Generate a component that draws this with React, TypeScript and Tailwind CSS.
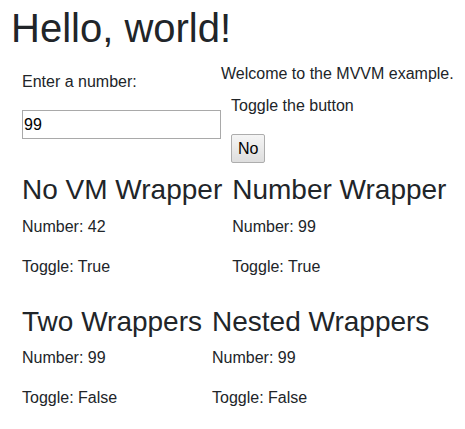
import React, { useState } from 'react';

type Props = { title: string; num: number; toggle: boolean };

const Wrapper: React.FC<Props> = ({ title, num, toggle }) => (
  <div className="mt-[10px]">
    <h3 className="text-[28px] leading-[1.2] mb-2 font-normal whitespace-nowrap">{title}</h3>
    <p className="mb-4">Number: {num}</p>
    <p className="mb-4">Toggle: {toggle ? 'True' : 'False'}</p>
  </div>
);

const App: React.FC = () => {
  const [num, setNum] = useState('99');
  const [on, setOn] = useState(false);

  return (
    <div
      className="min-h-screen bg-white text-[#212529] text-base leading-6 pl-[11px] pt-[4px]"
      style={{ fontFamily: '"Liberation Sans", Arial, sans-serif' }}
    >
      <h1 className="text-[40px] leading-[1.2] mb-2 font-normal">Hello, world!</h1>

      <div className="ml-[11px]">
        <div className="flex items-start">
          <div className="w-[199px] mt-[10px]">
            <p className="mb-4">Enter a number:</p>
            <input
              type="text"
              value={num}
              onChange={(e) => setNum(e.target.value)}
              className="w-[199px] h-[29px] border border-[#a9a9a9] px-px text-black leading-6 outline-none"
            />
          </div>
          <div className="pt-[2px]">
            <div>Welcome to the MVVM example.</div>
            <div className="ml-[10px] mt-[8px]">
              <p className="mb-4">Toggle the button</p>
              <button
                onClick={() => setOn(!on)}
                className="h-[29px] px-[6px] border border-[#adadad] rounded-[2px] bg-gradient-to-b from-[#f5f5f5] to-[#dedede] text-black leading-6"
              >
                {on ? 'Yes' : 'No'}
              </button>
            </div>
          </div>
        </div>

        <div className="flex gap-[10px]">
          <Wrapper title="No VM Wrapper" num={42} toggle={true} />
          <Wrapper title="Number Wrapper" num={Number(num) || 0} toggle={true} />
        </div>

        <div className="flex gap-[10px]">
          <Wrapper title="Two Wrappers" num={Number(num) || 0} toggle={on} />
          <Wrapper title="Nested Wrappers" num={Number(num) || 0} toggle={on} />
        </div>
      </div>
    </div>
  );
};

export default App;
